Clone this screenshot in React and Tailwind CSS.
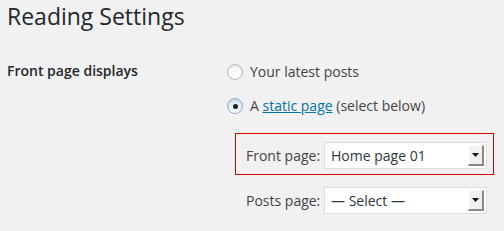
import React from "react";

function Radio({ checked }) {
  return (
    <span
      className={
        "w-4 h-4 shrink-0 rounded-full border flex items-center justify-center shadow-[inset_0_1px_2px_rgba(0,0,0,0.1)] " +
        (checked
          ? "border-[#8fa9c9] bg-gradient-to-b from-[#d4e6fa] to-[#f4f9ff]"
          : "border-[#b4b9be] bg-gradient-to-b from-[#f4f4f4] to-white")
      }
    >
      {checked && <span className="w-[5px] h-[5px] rounded-full bg-[#1e1e1e]" />}
    </span>
  );
}

function Select({ value }) {
  return (
    <div className="w-[163px] h-[27px] shrink-0 bg-white border border-[#ddd] flex items-center justify-between pl-[6px] pr-[2px]">
      <span className="text-[14px] text-[#32373c] whitespace-nowrap">{value}</span>
      <span className="w-4 h-[21px] bg-[#f1f1f1] border-r-2 border-b-2 border-[#888] border-t border-l border-t-white border-l-white flex items-center justify-center">
        <svg width="7" height="4" viewBox="0 0 7 4"><path d="M0 0h7L3.5 4z" fill="#111" /></svg>
      </span>
    </div>
  );
}

export default function App() {
  return (
    <div className="w-[504px] h-[231px] bg-[#f1f1f1] text-[#444] overflow-hidden" style={{ fontFamily: "'Open Sans', sans-serif" }}>
      <h1 className="text-[23px] leading-[29px] text-[#23282d] pl-[7px] pt-[2px]">Reading Settings</h1>
      <div className="flex mt-[30px]">
        <div className="w-[227px] pl-[7px] text-[14px] font-semibold text-[#23282d] leading-[18px] pt-[1px]">Front page displays</div>
        <div className="flex flex-col">
          <label className="flex items-center gap-[7px] text-[14px] leading-[20px] h-[22px]">
            <Radio />
            <span>Your latest posts</span>
          </label>
          <label className="flex items-center gap-[7px] text-[14px] leading-[20px] h-[22px] mt-[12px]">
            <Radio checked />
            <span>A <a className="text-[#0073aa] underline">static page</a> (select below)</span>
          </label>
          <div className="ml-[8px] mt-[16px] w-[259px] border border-[#dd0000] flex items-center pl-[10px] pt-[8px] pb-[5px]">
            <span className="text-[14px] w-[78px] shrink-0 whitespace-nowrap">Front page:</span>
            <Select value="Home page 01" />
          </div>
          <div className="ml-[8px] mt-[12px] w-[259px] flex items-center pl-[11px]">
            <span className="text-[14px] w-[78px] shrink-0 whitespace-nowrap">Posts page:</span>
            <Select value="— Select —" />
          </div>
        </div>
      </div>
    </div>
  );
}
